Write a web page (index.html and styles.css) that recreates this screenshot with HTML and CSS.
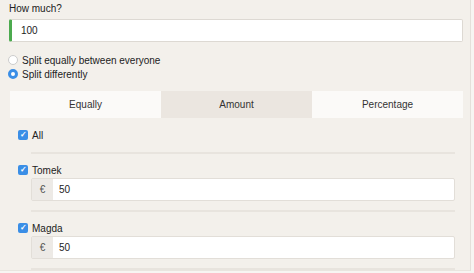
FILE: index.html
```html
<!DOCTYPE html>
<html lang="en">
<head>
  <meta charset="UTF-8">
  <title>Split bill</title>
  <link rel="stylesheet" href="styles.css">
</head>
<body>
  <div class="panel">
    <label class="field-label">How much?</label>
    <div class="amount-input">100</div>

    <div class="radios">
      <label class="radio"><span class="dot"></span>Split equally between everyone</label>
      <label class="radio"><span class="dot checked"></span>Split differently</label>
    </div>

    <div class="tabs">
      <div class="tab">Equally</div>
      <div class="tab active">Amount</div>
      <div class="tab">Percentage</div>
    </div>

    <div class="people">
      <label class="check"><span class="box">&#10003;</span>All</label>
      <hr class="sep">

      <label class="check"><span class="box">&#10003;</span>Tomek</label>
      <div class="input-group">
        <span class="addon">&euro;</span>
        <span class="value">50</span>
      </div>
      <hr class="sep">

      <label class="check"><span class="box">&#10003;</span>Magda</label>
      <div class="input-group">
        <span class="addon">&euro;</span>
        <span class="value">50</span>
      </div>
      <hr class="sep">
    </div>
  </div>
</body>
</html>
```

FILE: styles.css
```css
* {
  margin: 0;
  padding: 0;
  box-sizing: border-box;
}

body {
  font-family: 'Liberation Sans', Arial, sans-serif;
  font-size: 10px;
  color: #222;
  background-color: #f7f5f2;
}

.panel {
  width: 471px;
  height: 271px;
  background: #f3f0eb;
  border-right: 1px solid #e4e0da;
  border-bottom: 1px solid #e9e5df;
  padding: 3px 7px 0 9px;
}

.field-label {
  display: block;
  line-height: 12px;
  height: 16px;
}

.amount-input {
  height: 23px;
  background: #fff;
  border: 1px solid #ddd9d3;
  border-left: 3px solid #4caa4f;
  border-radius: 2px;
  padding-left: 9px;
  line-height: 21px;
}

.radios {
  margin-top: 12px;
  display: flex;
  flex-direction: column;
  gap: 2px;
}

.radio {
  display: flex;
  align-items: center;
  gap: 4px;
  height: 12px;
  margin-left: -1px;
}

.dot {
  width: 10px;
  height: 10px;
  border-radius: 50%;
  background: #fff;
  border: 1px solid #ccc;
}

.dot.checked {
  background: #fff;
  border: 3px solid #3a8ee6;
}

.tabs {
  display: flex;
  margin: 11px 0 0 1px;
  height: 27px;
}

.tab {
  flex: 1;
  text-align: center;
  line-height: 27px;
  background: #fbfaf8;
  color: #333;
}

.tab.active {
  background: #ebe6e0;
}

.people {
  padding: 10px 8px 0 9px;
}

.check {
  display: flex;
  align-items: center;
  gap: 4px;
  height: 14px;
}

.box {
  width: 10px;
  height: 10px;
  border-radius: 2px;
  background: #3a8ee6;
  color: #fff;
  font-size: 8px;
  line-height: 10px;
  text-align: center;
  font-weight: bold;
}

.sep {
  border: none;
  border-top: 2px solid #e8e4de;
  margin: 10px 0 9px 13px;
}

.input-group + .sep {
  margin-top: 9px;
}

.input-group {
  display: flex;
  height: 23px;
  margin: 1px 0 0 13px;
  border: 1px solid #e2ded8;
  border-radius: 2px;
  background: #fff;
}

.addon {
  width: 21px;
  background: #edeae6;
  text-align: center;
  line-height: 21px;
  color: #555;
}

.value {
  padding-left: 6px;
  line-height: 21px;
}
```
